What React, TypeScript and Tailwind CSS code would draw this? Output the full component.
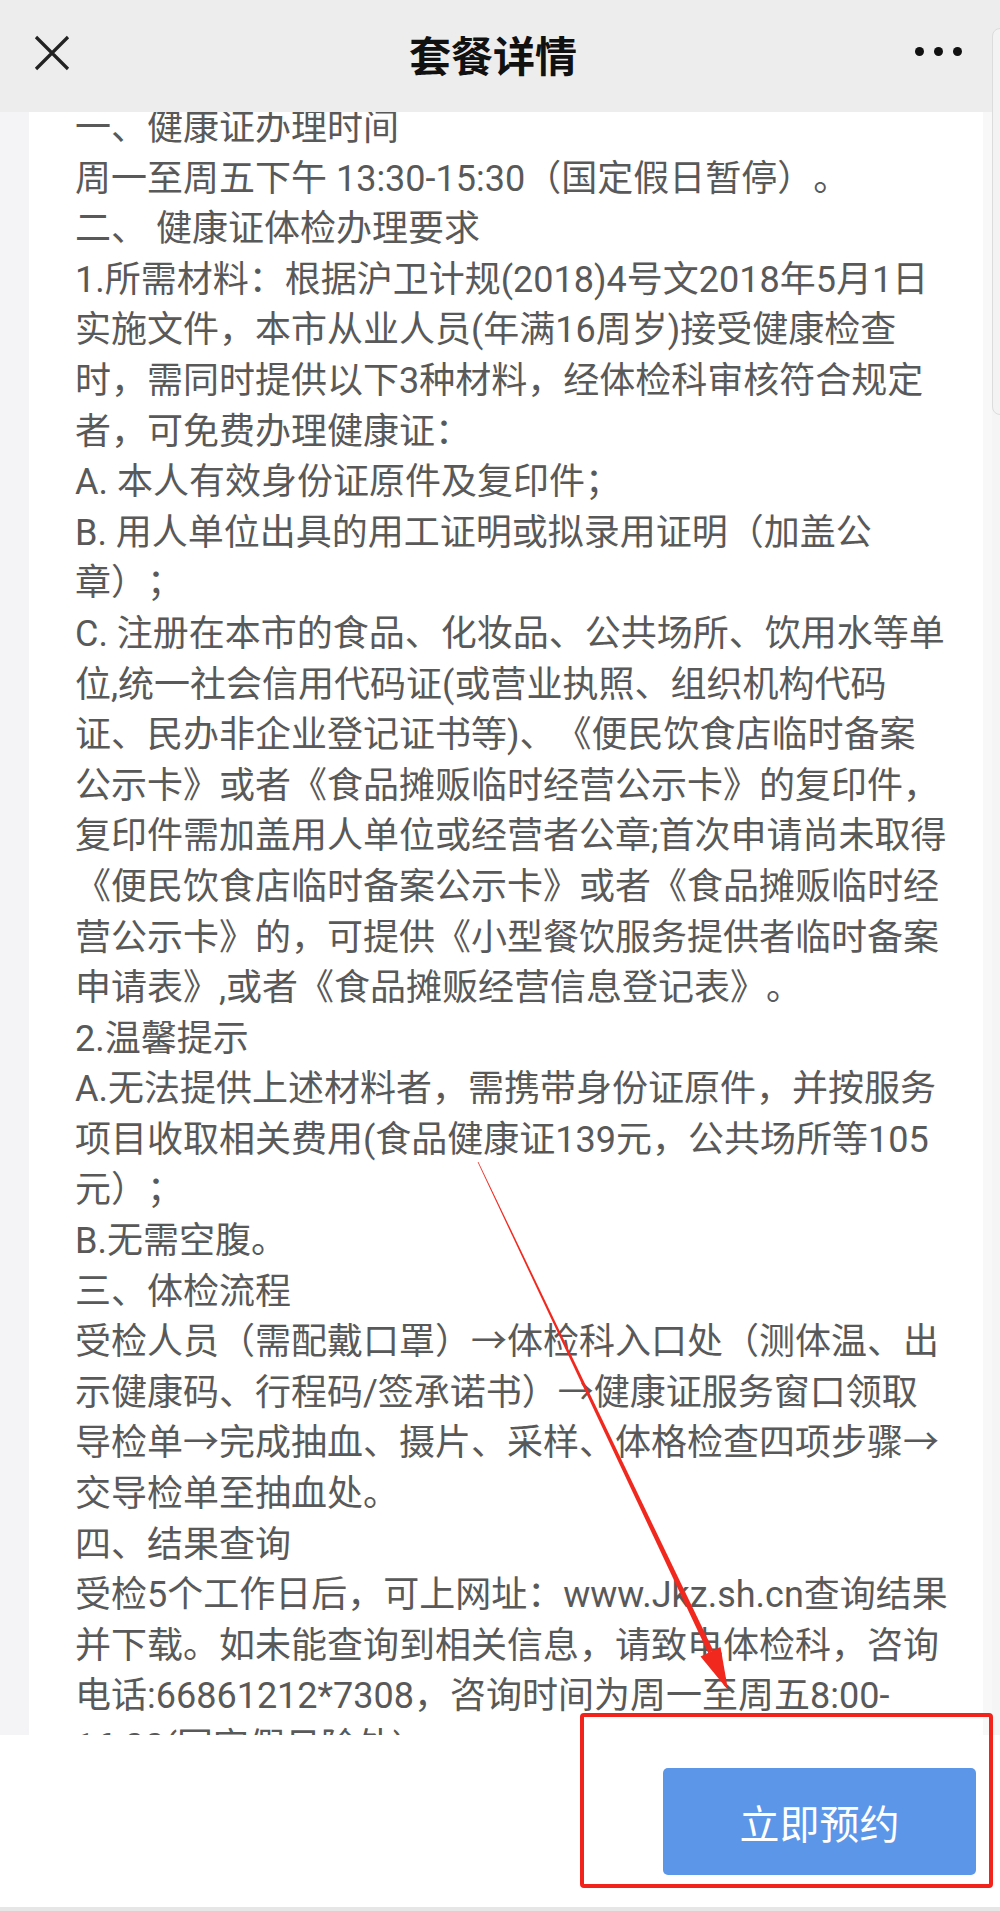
import React from 'react';

const lines: string[] = [
    '一、健康证办理时间',
    '周一至周五下午 13:30-15:30（国定假日暂停）。',
    '二、 健康证体检办理要求',
    '1.所需材料：根据沪卫计规(2018)4号文2018年5月1日',
    '实施文件，本市从业人员(年满16周岁)接受健康检查',
    '时，需同时提供以下3种材料，经体检科审核符合规定',
    '者，可免费办理健康证：',
    'A. 本人有效身份证原件及复印件；',
    'B. 用人单位出具的用工证明或拟录用证明（加盖公',
    '章）；',
    'C. 注册在本市的食品、化妆品、公共场所、饮用水等单',
    '位,统一社会信用代码证(或营业执照、组织机构代码',
    '证、民办非企业登记证书等)、《便民饮食店临时备案',
    '公示卡》或者《食品摊贩临时经营公示卡》的复印件，',
    '复印件需加盖用人单位或经营者公章;首次申请尚未取得',
    '《便民饮食店临时备案公示卡》或者《食品摊贩临时经',
    '营公示卡》的，可提供《小型餐饮服务提供者临时备案',
    '申请表》,或者《食品摊贩经营信息登记表》。',
    '2.温馨提示',
    'A.无法提供上述材料者，需携带身份证原件，并按服务',
    '项目收取相关费用(食品健康证139元，公共场所等105',
    '元）；',
    'B.无需空腹。',
    '三、体检流程',
    '受检人员（需配戴口罩）→体检科入口处（测体温、出',
    '示健康码、行程码/签承诺书）→健康证服务窗口领取',
    '导检单→完成抽血、摄片、采样、体格检查四项步骤→',
    '交导检单至抽血处。',
    '四、结果查询',
    '受检5个工作日后，可上网址：www.Jkz.sh.cn查询结果',
    '并下载。如未能查询到相关信息，请致电体检科，咨询',
    '电话:66861212*7308，咨询时间为周一至周五8:00-',
    '16:00(国定假日除外)。',
];

export default function App() {
    return (
        <div
            className="relative w-[1000px] h-[1911px] flex flex-col overflow-hidden bg-white"
            style={{ fontFamily: 'Roboto, "Noto Sans CJK SC", sans-serif' }}
        >
            {/* header */}
            <div className="h-[112px] shrink-0 bg-[#ededed] flex items-center justify-between pl-[33px] pr-[38px]">
                <svg width="38" height="38" viewBox="0 0 38 38" className="-mt-[6px]">
                    <path d="M3 3 L35 35 M35 3 L3 35" stroke="#222" strokeWidth="3.2" fill="none" />
                </svg>
                <div
                    className="text-[42px] font-bold text-[#111] -mt-[6px]"
                    style={{ fontFamily: '"Noto Sans CJK SC", sans-serif' }}
                >
                    套餐详情
                </div>
                <div className="flex gap-[10px] -mt-[10px]">
                    <span className="w-[9px] h-[9px] rounded-full bg-[#111]" />
                    <span className="w-[9px] h-[9px] rounded-full bg-[#111]" />
                    <span className="w-[9px] h-[9px] rounded-full bg-[#111]" />
                </div>
            </div>

            {/* content */}
            <div className="flex-1 flex min-h-0">
                <div className="w-[29px] bg-[#f4f4f6]" />
                <div className="flex-1 bg-white overflow-hidden pl-[46px]">
                    <div className="-mt-[9px] text-[36px] leading-[50.6px] text-[#595959] [text-spacing-trim:space-all]">
                        {lines.map((l, i) => (
                            <div key={i} className="whitespace-nowrap">
                                {l}
                            </div>
                        ))}
                    </div>
                </div>
                <div className="w-[9px] bg-[#f8f8f8]" />
                <div className="w-[8px] bg-[#f5f5f5]" />
            </div>

            {/* footer */}
            <div className="h-[172px] shrink-0 bg-white flex justify-end items-start pt-[33px] pr-[24px]">
                <button className="w-[313px] h-[107px] rounded-[5px] bg-[#5b96e9] text-white text-[40px] flex items-center justify-center"
                    style={{ fontFamily: '"Noto Sans CJK SC", sans-serif' }}
                >
                    立即预约
                </button>
            </div>
            <div className="h-[4px] shrink-0 bg-[#e6e6e6]" />

            {/* faint window edge at right */}
            <div className="absolute left-[992px] top-[28px] w-[20px] h-[387px] rounded-[8px] border border-[#dcdcdc] bg-[#f3f3f3]" />

            {/* annotation: red box */}
            <div className="absolute left-[580px] top-[1713px] w-[413px] h-[175px] border-[4px] border-[#f2231b] rounded-[4px] pointer-events-none" />

            {/* annotation: red arrow */}
            <svg className="absolute left-0 top-0 pointer-events-none" width="1000" height="1911" viewBox="0 0 1000 1911">
                <polygon
                    points="477.6,1162 478.4,1162 713.3,1650.6 708.3,1653.2"
                    fill="#f0281e"
                />
                <polygon points="700.5,1656.5 720.5,1647 728,1690" fill="#f0281e" />
            </svg>
        </div>
    );
}
